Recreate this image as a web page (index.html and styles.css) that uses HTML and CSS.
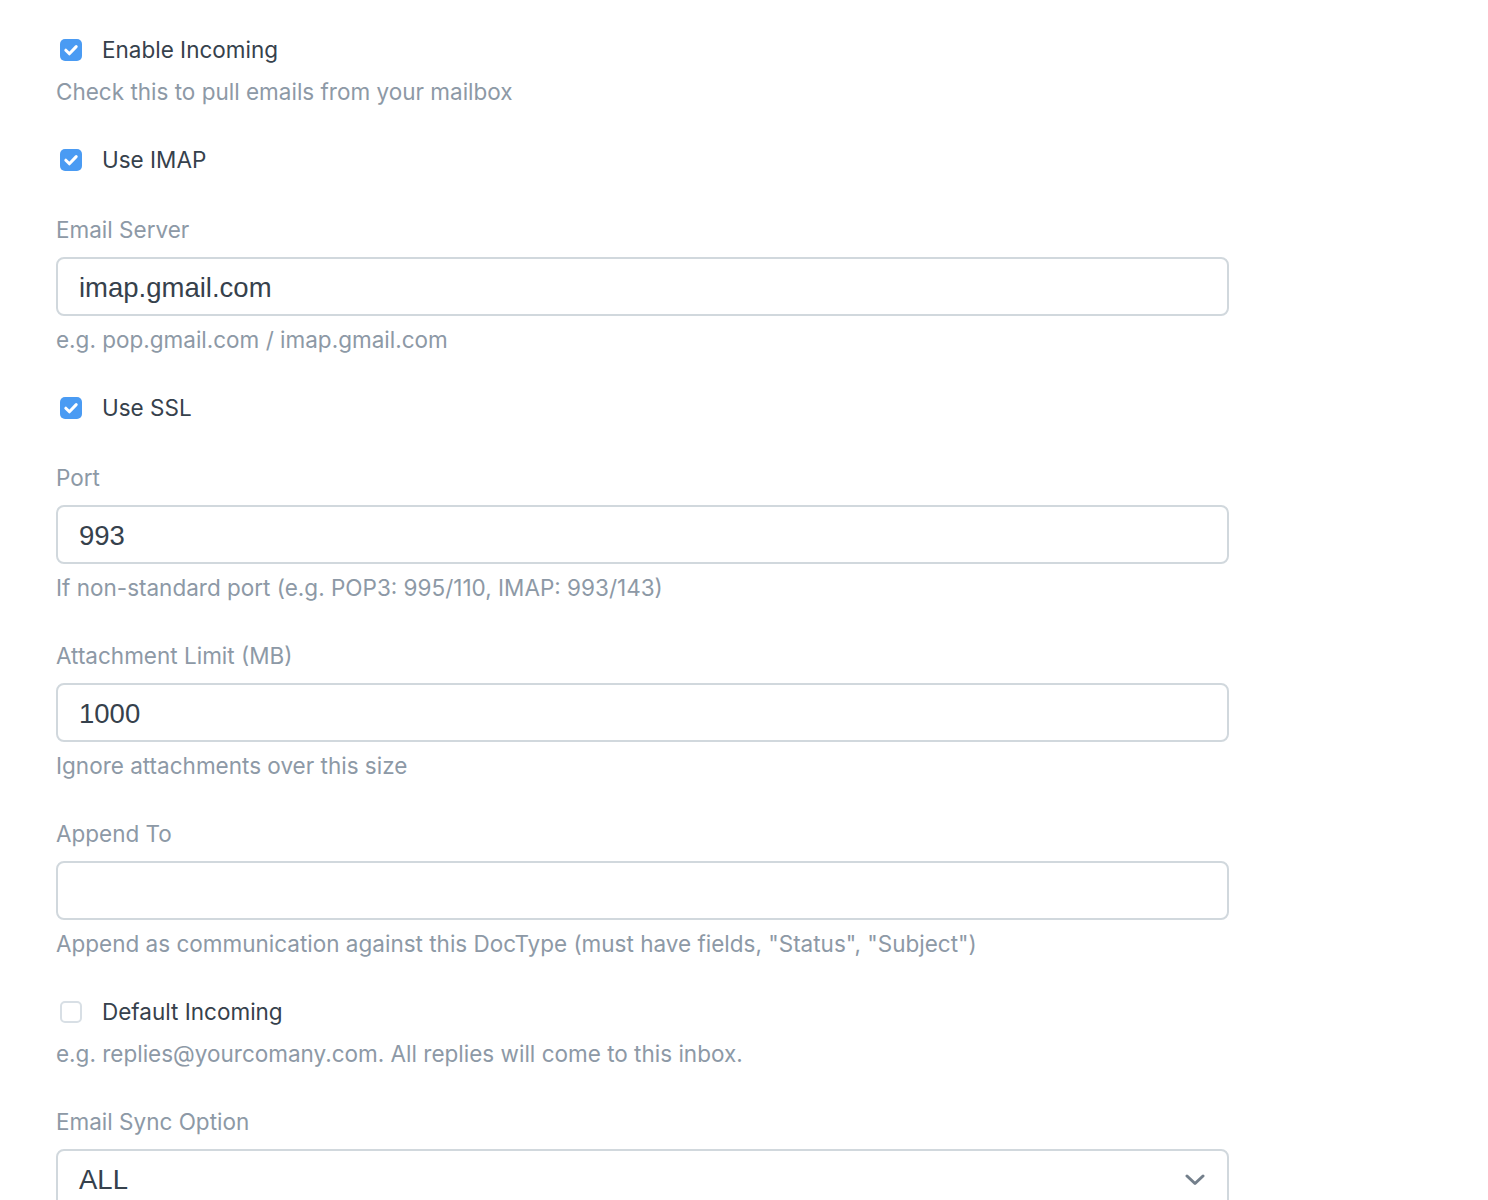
FILE: index.html
```html
<!DOCTYPE html>
<html>
<head>
<meta charset="utf-8">
<link rel="stylesheet" href="styles.css">
</head>
<body>
<div class="form">
  <div class="field">
    <label class="check-row"><span class="box checked"><svg viewBox="0 0 22 22" width="22" height="22"><path d="M5.8 11.2 L9.4 14.8 L16.2 7.6" fill="none" stroke="#fff" stroke-width="3" stroke-linecap="round" stroke-linejoin="round"/></svg></span><span class="check-label">Enable Incoming</span></label>
    <div class="help">Check this to pull emails from your mailbox</div>
  </div>
  <div class="field solo">
    <label class="check-row"><span class="box checked"><svg viewBox="0 0 22 22" width="22" height="22"><path d="M5.8 11.2 L9.4 14.8 L16.2 7.6" fill="none" stroke="#fff" stroke-width="3" stroke-linecap="round" stroke-linejoin="round"/></svg></span><span class="check-label">Use IMAP</span></label>
  </div>
  <div class="field">
    <div class="label">Email Server</div>
    <div class="input">imap.gmail.com</div>
    <div class="help">e.g. pop.gmail.com / imap.gmail.com</div>
  </div>
  <div class="field solo">
    <label class="check-row"><span class="box checked"><svg viewBox="0 0 22 22" width="22" height="22"><path d="M5.8 11.2 L9.4 14.8 L16.2 7.6" fill="none" stroke="#fff" stroke-width="3" stroke-linecap="round" stroke-linejoin="round"/></svg></span><span class="check-label">Use SSL</span></label>
  </div>
  <div class="field">
    <div class="label">Port</div>
    <div class="input">993</div>
    <div class="help">If non-standard port (e.g. POP3: 995/110, IMAP: 993/143)</div>
  </div>
  <div class="field">
    <div class="label">Attachment Limit (MB)</div>
    <div class="input">1000</div>
    <div class="help">Ignore attachments over this size</div>
  </div>
  <div class="field">
    <div class="label">Append To</div>
    <div class="input"></div>
    <div class="help">Append as communication against this DocType (must have fields, "Status", "Subject")</div>
  </div>
  <div class="field">
    <label class="check-row"><span class="box"></span><span class="check-label">Default Incoming</span></label>
    <div class="help">e.g. replies@yourcomany.com. All replies will come to this inbox.</div>
  </div>
  <div class="field">
    <div class="label">Email Sync Option</div>
    <div class="input select">ALL<svg class="chev" viewBox="0 0 20 12" width="20" height="12"><path d="M2 2 L10 9.5 L18 2" fill="none" stroke="#737f8b" stroke-width="3" stroke-linecap="round" stroke-linejoin="round"/></svg></div>
  </div>
</div>
</body>
</html>
```

FILE: styles.css
```css
html, body {
  margin: 0;
  padding: 0;
  background: #ffffff;
}
body {
  font-family: Inter, "Noto Sans", sans-serif;
  font-size: 22.5px;
  overflow: hidden;
  height: 1200px;
}
.form {
  width: 1173px;
  margin-left: 56px;
  padding-top: 35px;
}
.field {
  display: flex;
  flex-direction: column;
  margin-bottom: 38px;
}
.field.solo {
  margin-bottom: 40px;
}
.check-row {
  display: flex;
  align-items: center;
  height: 30px;
}
.box {
  box-sizing: border-box;
  width: 22px;
  height: 22px;
  margin-left: 4px;
  margin-right: 20px;
  border-radius: 5px;
  border: 2px solid #d8dfe5;
  background: #fff;
  display: flex;
}
.box.checked {
  border: none;
  background: #4a9bf3;
}
.check-label {
  color: #36414c;
  line-height: 30px;
}
.label {
  color: #8d99a6;
  line-height: 30px;
  margin-bottom: 12px;
}
.help {
  color: #8d99a6;
  line-height: 30px;
}
.check-row + .help {
  margin-top: 12px;
}
.input + .help {
  margin-top: 9px;
}
.input {
  box-sizing: border-box;
  height: 59px;
  border: 2px solid #d1d8dd;
  border-radius: 8px;
  padding-left: 21px;
  padding-top: 3px;
  font-family: "Liberation Sans", Arial, sans-serif;
  font-size: 27.5px;
  color: #36414c;
  display: flex;
  align-items: center;
}
.select {
  justify-content: space-between;
  padding-right: 22px;
}
.chev {
  display: block;
}
```
